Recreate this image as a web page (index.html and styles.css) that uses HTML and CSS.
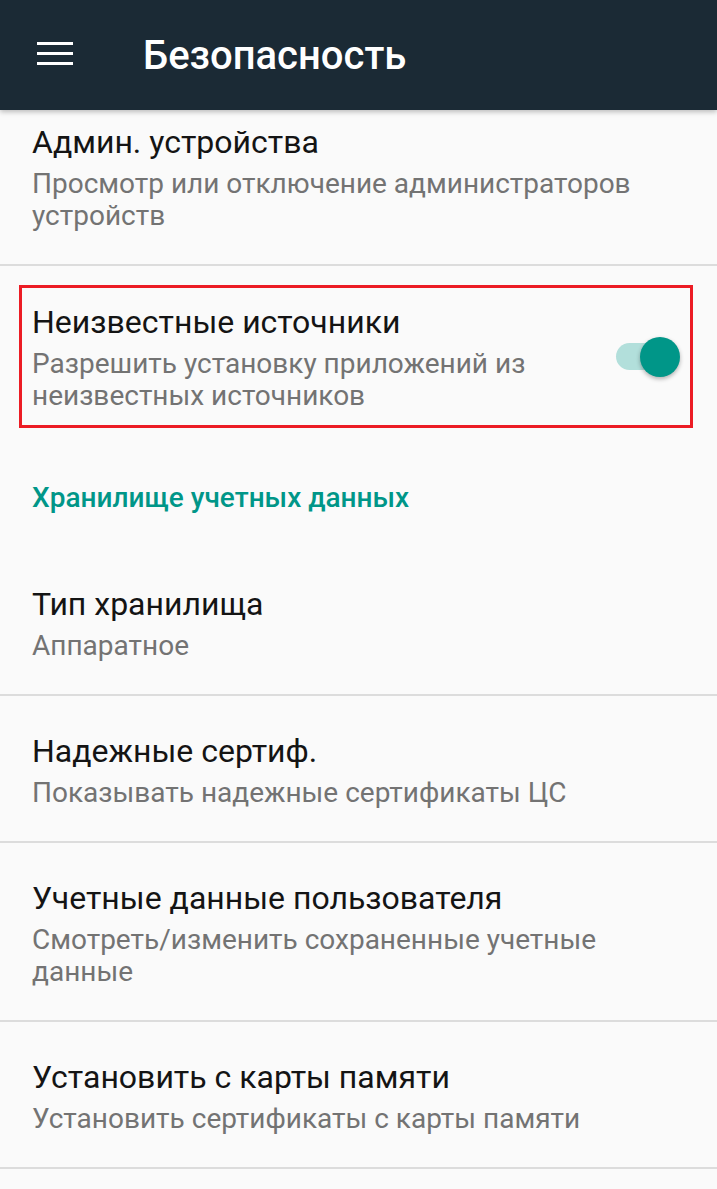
FILE: index.html
```html
<!DOCTYPE html>
<html lang="ru">
<head>
    <meta charset="UTF-8">
    <meta name="viewport" content="width=device-width, initial-scale=1.0">
    <title>Безопасность</title>
    <link rel="stylesheet" href="styles.css">
</head>
<body>

<div class="toolbar">
    <svg class="menu-icon" width="36" height="24" viewBox="0 0 36 24">
        <rect x="0" y="0" width="36" height="3" fill="#fff"/>
        <rect x="0" y="10" width="36" height="3" fill="#fff"/>
        <rect x="0" y="20" width="36" height="3" fill="#fff"/>
    </svg>
    <h1 class="toolbar-title">Безопасность</h1>
</div>

<div class="settings">
    <div class="pref pref-first">
        <div class="pref-text">
            <div class="pref-title">Админ. устройства</div>
            <div class="pref-summary">Просмотр или отключение администраторов устройств</div>
        </div>
    </div>

    <div class="pref pref-highlight">
        <div class="pref-text">
            <div class="pref-title">Неизвестные источники</div>
            <div class="pref-summary">Разрешить установку приложений из неизвестных источников</div>
        </div>
        <div class="switch">
            <div class="switch-track"></div>
            <div class="switch-thumb"></div>
        </div>
    </div>

    <div class="category">Хранилище учетных данных</div>

    <div class="pref">
        <div class="pref-text">
            <div class="pref-title">Тип хранилища</div>
            <div class="pref-summary">Аппаратное</div>
        </div>
    </div>

    <div class="pref">
        <div class="pref-text">
            <div class="pref-title">Надежные сертиф.</div>
            <div class="pref-summary">Показывать надежные сертификаты ЦС</div>
        </div>
    </div>

    <div class="pref">
        <div class="pref-text">
            <div class="pref-title">Учетные данные пользователя</div>
            <div class="pref-summary">Смотреть/изменить сохраненные учетные данные</div>
        </div>
    </div>

    <div class="pref">
        <div class="pref-text">
            <div class="pref-title">Установить с карты памяти</div>
            <div class="pref-summary">Установить сертификаты с карты памяти</div>
        </div>
    </div>
</div>

</body>
</html>
```

FILE: styles.css
```css
body {
    font-family: Roboto, "Noto Sans", sans-serif;
    background-color: #fafafa;
    margin: 0;
    padding: 0;
    overflow: hidden;
}

.toolbar {
    height: 110px;
    background-color: #1b2a35;
    display: flex;
    align-items: center;
    padding-left: 37px;
    box-shadow: 0 2px 5px rgba(0, 0, 0, 0.25);
    position: relative;
}

.menu-icon {
    display: block;
    margin-top: -2px;
}

.toolbar-title {
    margin: 0 0 0 70px;
    color: #fff;
    font-size: 40px;
    font-weight: 500;
}

.pref {
    display: flex;
    align-items: center;
    padding: 35px 32px 32px 32px;
    border-bottom: 2px solid #dcdcdc;
}

.pref-first {
    padding-top: 12px;
}

.pref-text {
    flex: 1;
}

.pref-title {
    font-size: 32px;
    line-height: 40px;
    color: #141414;
}

.pref-summary {
    font-size: 28px;
    line-height: 32px;
    color: #737373;
    margin-top: 6px;
}

.pref-highlight {
    border: 3px solid #ec1c24;
    margin: 19px 24px 0 19px;
    padding: 14px 10px 13px 10px;
}

.switch {
    position: relative;
    width: 64px;
    height: 40px;
    margin-left: 30px;
}

.switch-track {
    position: absolute;
    left: 0;
    top: 6px;
    width: 56px;
    height: 27px;
    border-radius: 14px;
    background-color: #b2dfdb;
}

.switch-thumb {
    position: absolute;
    right: 0;
    top: 0;
    width: 40px;
    height: 40px;
    border-radius: 50%;
    background-color: #009688;
    box-shadow: 0 2px 4px rgba(0, 0, 0, 0.3);
}

.category {
    color: #009688;
    font-size: 28px;
    font-weight: 500;
    line-height: 40px;
    padding: 50px 32px 31px 32px;
}
```
